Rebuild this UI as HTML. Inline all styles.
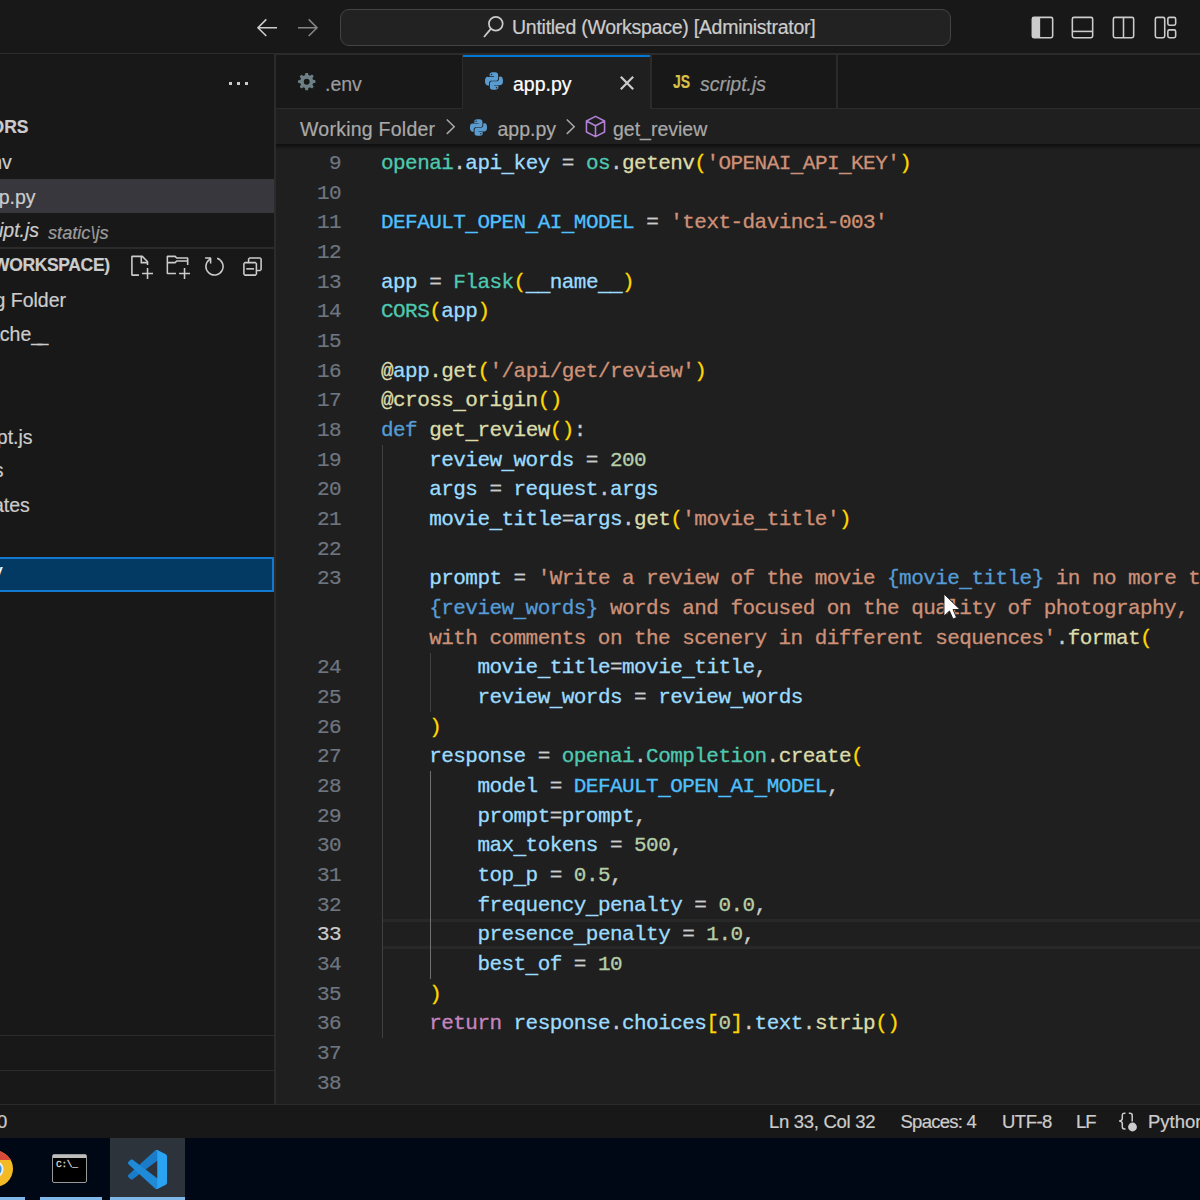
<!DOCTYPE html>
<html><head><meta charset="utf-8">
<style>
*{margin:0;padding:0;box-sizing:border-box}
html,body{width:1200px;height:1200px;overflow:hidden;background:#181818;font-family:"Liberation Sans",sans-serif;color:#CCCCCC;position:relative}
div,svg{position:absolute}
span{position:static}
.u{position:relative;top:3px}
.t{white-space:pre;line-height:1;-webkit-text-stroke:0.2px}
.ln{left:0;width:341px;text-align:right;font-family:"Liberation Mono",monospace;font-size:21px;letter-spacing:-0.6px;-webkit-text-stroke:0.2px;color:#6E7681;height:29.66px;line-height:29.66px}
.ln.act{color:#CCCCCC}
.cl{left:381px;font-family:"Liberation Mono",monospace;font-size:21px;letter-spacing:-0.555px;color:#CCCCCC;height:29.66px;line-height:29.66px;white-space:pre;-webkit-text-stroke:0.3px}
.v{color:#9CDCFE}.f{color:#DCDCAA}.c{color:#4EC9B0}.s{color:#CE9178}.k{color:#569CD6}.x{color:#C586C0}.n{color:#B5CEA8}.q{color:#4FC1FF}.b{color:#FFD700}.o{color:#CCCCCC}
.guide{width:1.5px;background:#404040}
.guide.ga{background:#707070}
.curline{left:383px;width:817px;border-top:3px solid #282828;border-bottom:3px solid #282828}
</style></head><body>
<!-- ============ TITLE BAR ============ -->
<div style="left:0;top:0;width:1200px;height:53px;background:#181818"></div>
<div style="left:0;top:53px;width:1200px;height:1.5px;background:#2B2B2B"></div>
<!-- back / forward -->
<svg style="left:250px;top:10px" width="80" height="35"><path d="M8 17.7 H27 M16.3 9.4 L8 17.7 L16.3 26" stroke="#CCCCCC" stroke-width="1.6" fill="none"/><path d="M48 17.7 H67 M58.7 9.4 L67 17.7 L58.7 26" stroke="#858585" stroke-width="1.6" fill="none"/></svg>
<!-- command center -->
<div style="left:340px;top:9px;width:611px;height:37px;border:1.5px solid #444444;border-radius:9px;background:#222222"></div>
<svg style="left:470px;top:10px" width="50" height="35"><circle cx="25.8" cy="13.8" r="6.9" stroke="#CCCCCC" stroke-width="1.7" fill="none"/><path d="M21 18.7 L14 27" stroke="#CCCCCC" stroke-width="1.8"/></svg>
<div class="t" style="left:512px;top:18.3px;font-size:19.5px;letter-spacing:-0.26px;color:#CCCCCC">Untitled (Workspace) [Administrator]</div>
<!-- layout icons -->
<svg style="left:1030px;top:15px" width="25" height="25" viewBox="0 0 16 16"><rect x="1.5" y="1.5" width="13" height="13" rx="1" stroke="#CCCCCC" stroke-width="1" fill="none"/><rect x="1.5" y="1.5" width="5" height="13" fill="#CCCCCC"/></svg>
<svg style="left:1070px;top:15px" width="25" height="25" viewBox="0 0 16 16"><rect x="1.5" y="1.5" width="13" height="13" rx="1" stroke="#CCCCCC" stroke-width="1" fill="none"/><path d="M1.5 10.5 H14.5" stroke="#CCCCCC" stroke-width="1"/></svg>
<svg style="left:1111px;top:15px" width="25" height="25" viewBox="0 0 16 16"><rect x="1.5" y="1.5" width="13" height="13" rx="1" stroke="#CCCCCC" stroke-width="1" fill="none"/><path d="M8 1.5 V14.5" stroke="#CCCCCC" stroke-width="1"/></svg>
<svg style="left:1153px;top:15px" width="25" height="25" viewBox="0 0 16 16"><rect x="1.5" y="1.5" width="6" height="13" rx="1" stroke="#CCCCCC" stroke-width="1" fill="none"/><rect x="9.5" y="1.5" width="5" height="5" rx="1" stroke="#CCCCCC" stroke-width="1" fill="none"/><rect x="9.5" y="9.5" width="5" height="5" rx="1" stroke="#CCCCCC" stroke-width="1" fill="none"/></svg>

<!-- ============ SIDEBAR ============ -->
<div style="left:0;top:54px;width:274px;height:1050px;background:#181818"></div>
<div style="left:274px;top:54px;width:1.5px;height:1050px;background:#2B2B2B"></div>
<!-- more dots -->
<div style="left:228.5px;top:82px;width:3px;height:3px;background:#CCCCCC"></div>
<div style="left:236.5px;top:82px;width:3px;height:3px;background:#CCCCCC"></div>
<div style="left:244.5px;top:82px;width:3px;height:3px;background:#CCCCCC"></div>
<div class="t" style="left:-49px;top:118.5px;font-size:17.5px;font-weight:bold;color:#CCCCCC">EDITORS</div>
<div class="t" style="left:-25px;top:152.5px;font-size:19.5px;color:#CCCCCC">.env</div>
<div style="left:0;top:178.5px;width:274px;height:34px;background:#37373D"></div>
<div class="t" style="left:-23px;top:187.5px;font-size:19.5px;color:#CCCCCC">app.py</div>
<div class="t" style="left:-27px;top:221px;font-size:19.5px;color:#CCCCCC;font-style:italic">script.js</div><div class="t" style="left:48px;top:224px;font-size:18.2px;color:#9D9D9D;font-style:italic">static\js</div>
<div style="left:0;top:247px;width:274px;height:1.5px;background:#2B2B2B"></div>
<div class="t" style="left:-12.5px;top:257px;font-size:17.5px;font-weight:bold;letter-spacing:-0.35px;color:#CCCCCC">(WORKSPACE)</div>
<!-- action icons -->
<svg style="left:128px;top:254px" width="25" height="25" viewBox="0 0 16 16"><path d="M9.5 1.1l3.4 3.5.1.4v2h-1V6H8V2H3v11h4v1H2.5l-.5-.5v-12l.5-.5h6.7l.3.1zM9 2v3h2.9L9 2zm4 14h-1v-3H9v-1h3V9h1v3h3v1h-3v3z" fill="#CCCCCC"/></svg>
<svg style="left:165px;top:254px" width="25" height="25" viewBox="0 0 16 16"><path d="M14.5 2H7.71l-.85-.85L6.51 1h-5l-.5.5v11l.5.5H7v-1H1.99V6h4.49l.35-.15.86-.86H14v1.5l-.001.51h1.011V2.5L14.5 2zm-.51 2h-6.5l-.35.15-.86.86H2v-3h4.29l.85.85.36.15H14l-.01.99zM13 16h-1v-3H9v-1h3V9h1v3h3v1h-3v3z" fill="#CCCCCC"/></svg>
<svg style="left:202px;top:254px" width="25" height="25" viewBox="0 0 16 16"><path d="M4.681 3H2V2h3.5l.5.5V6H5V4a5 5 0 1 0 4.53-.761l.302-.954A6 6 0 1 1 4.681 3z" fill="#CCCCCC"/></svg>
<svg style="left:240px;top:254px" width="25" height="25" viewBox="0 0 16 16"><path d="M9 9H4v1h5V9z" fill="#CCCCCC"/><path d="M5 3l1-1h7l1 1v7l-1 1h-2v2l-1 1H3l-1-1V6l1-1h2V3zm1 2h4l1 1v4h2V3H6v2zm4 1H3v7h7V6z" fill="#CCCCCC"/></svg>
<div class="t" style="left:-65.8px;top:290.5px;font-size:19.5px;color:#CCCCCC">Working Folder</div>
<div class="t" style="left:-63.1px;top:325px;font-size:19.5px;color:#CCCCCC">__pycache<span style="letter-spacing:-4.6px">__</span></div>
<div class="t" style="left:-33.5px;top:427.5px;font-size:19.5px;color:#CCCCCC">script.js</div>
<div class="t" style="left:-6.3px;top:461px;font-size:19.5px;color:#CCCCCC">s</div>
<div class="t" style="left:-54.8px;top:496px;font-size:19.5px;color:#CCCCCC">templates</div>
<div style="left:0;top:556.5px;width:274px;height:35px;background:#023A64;border:2px solid #1279CE;border-left:none"></div>
<div class="t" style="left:-56px;top:562px;font-size:19.5px;color:#FFFFFF">app.py</div>
<div style="left:0;top:1034.5px;width:274px;height:1.5px;background:#2B2B2B"></div>
<div style="left:0;top:1069.5px;width:274px;height:1.5px;background:#2B2B2B"></div>

<!-- ============ TABS ============ -->
<div style="left:275.5px;top:54.5px;width:924.5px;height:53.5px;background:#181818"></div>
<div style="left:275.5px;top:107.5px;width:924.5px;height:1.5px;background:#2B2B2B"></div>
<div style="left:461.5px;top:54.5px;width:1.5px;height:53px;background:#2B2B2B"></div>
<div style="left:463px;top:54.5px;width:187px;height:54.5px;background:#1F1F1F"></div>
<div style="left:463px;top:54.5px;width:187px;height:2px;background:#0078D4"></div>
<div style="left:650px;top:54.5px;width:1.5px;height:53px;background:#2B2B2B"></div>
<div style="left:836px;top:54.5px;width:1.5px;height:53px;background:#2B2B2B"></div>
<!-- gear -->
<svg style="left:296px;top:71px" width="21" height="21" viewBox="0 0 16 16"><path fill="#6D8086" fill-rule="evenodd" d="M9.1 1.3l.4 1.8c.4.1.8.3 1.1.5l1.6-1 1.3 1.3-1 1.6c.2.4.4.7.5 1.1l1.8.4v1.9l-1.8.4c-.1.4-.3.8-.5 1.1l1 1.6-1.3 1.3-1.6-1c-.4.2-.7.4-1.1.5l-.4 1.8H7.2l-.4-1.8c-.4-.1-.8-.3-1.1-.5l-1.6 1-1.3-1.3 1-1.6c-.2-.4-.4-.7-.5-1.1l-1.8-.4V7.2l1.8-.4c.1-.4.3-.8.5-1.1l-1-1.6 1.3-1.3 1.6 1c.4-.2.7-.4 1.1-.5l.4-1.8h1.9zM8.15 5.9a2.25 2.25 0 1 0 0 4.5 2.25 2.25 0 0 0 0-4.5z"/></svg>
<div class="t" style="left:325px;top:74.5px;font-size:19.5px;color:#9D9D9D">.env</div>
<!-- python icon -->
<svg style="left:484px;top:71px" width="20" height="20" viewBox="0 0 16 16"><path fill="#5A9BD0" d="M7.9 1C4.3 1 4.5 2.6 4.5 2.6v1.6h3.5v.5H3.1S.8 4.4.8 8s2 3.5 2 3.5h1.2V9.8s-.1-2 2-2h3.4s1.9 0 1.9-1.9V2.9S11.6 1 7.9 1zM6 2.1c.3 0 .6.3.6.6s-.3.6-.6.6-.6-.3-.6-.6.3-.6.6-.6z"/><path fill="#5A9BD0" d="M8.1 15c3.6 0 3.4-1.6 3.4-1.6v-1.6H8v-.5h4.9s2.3.3 2.3-3.3-2-3.5-2-3.5H12v1.7s.1 2-2 2H6.6s-1.9 0-1.9 1.9v3.1S4.4 15 8.1 15zm1.9-1.1c-.3 0-.6-.3-.6-.6s.3-.6.6-.6.6.3.6.6-.3.6-.6.6z"/></svg>
<div class="t" style="left:513px;top:75px;font-size:19.5px;color:#FFFFFF">app.py</div>
<svg style="left:616px;top:72px" width="22" height="22" viewBox="0 0 16 16"><path d="M3.5 3.5 L12.5 12.5 M12.5 3.5 L3.5 12.5" stroke="#CCCCCC" stroke-width="1.6"/></svg>
<div class="t" style="left:673px;top:74px;font-size:17.5px;font-weight:bold;color:#D8C048;transform:scaleX(0.8);transform-origin:0 0">JS</div>
<div class="t" style="left:700px;top:75px;font-size:19.5px;font-style:italic;color:#9D9D9D">script.js</div>

<!-- ============ BREADCRUMBS ============ -->
<div style="left:275.5px;top:109px;width:924.5px;height:35px;background:#1F1F1F"></div>
<div class="t" style="left:300px;top:119.5px;font-size:19.5px;letter-spacing:0.25px;color:#A9A9A9">Working Folder</div>
<svg style="left:445px;top:118px" width="12" height="18"><path d="M1.8 1.5 L9.2 8.7 L1.8 15.9" stroke="#A9A9A9" stroke-width="1.5" fill="none"/></svg>
<svg style="left:469px;top:118px" width="19" height="19" viewBox="0 0 16 16"><path fill="#5A9BD0" d="M7.9 1C4.3 1 4.5 2.6 4.5 2.6v1.6h3.5v.5H3.1S.8 4.4.8 8s2 3.5 2 3.5h1.2V9.8s-.1-2 2-2h3.4s1.9 0 1.9-1.9V2.9S11.6 1 7.9 1zM6 2.1c.3 0 .6.3.6.6s-.3.6-.6.6-.6-.3-.6-.6.3-.6.6-.6z"/><path fill="#5A9BD0" d="M8.1 15c3.6 0 3.4-1.6 3.4-1.6v-1.6H8v-.5h4.9s2.3.3 2.3-3.3-2-3.5-2-3.5H12v1.7s.1 2-2 2H6.6s-1.9 0-1.9 1.9v3.1S4.4 15 8.1 15zm1.9-1.1c-.3 0-.6-.3-.6-.6s.3-.6.6-.6.6.3.6.6-.3.6-.6.6z"/></svg>
<div class="t" style="left:497.5px;top:119.5px;font-size:19.5px;color:#A9A9A9">app.py</div>
<svg style="left:565px;top:118px" width="12" height="18"><path d="M1.8 1.5 L9.2 8.7 L1.8 15.9" stroke="#A9A9A9" stroke-width="1.5" fill="none"/></svg>
<svg style="left:583px;top:114px" width="25" height="25" viewBox="0 0 16 16"><path d="M8 1.5 L13.8 4.5 V11.5 L8 14.5 L2.2 11.5 V4.5 Z M2.2 4.5 L8 7.5 L13.8 4.5 M8 7.5 V14.5" stroke="#B180D7" stroke-width="1" fill="none" stroke-linejoin="round"/></svg>
<div class="t" style="left:613px;top:119.5px;font-size:19.5px;color:#A9A9A9">get_review</div>

<!-- ============ EDITOR ============ -->
<div style="left:275.5px;top:144px;width:924.5px;height:960px;background:#1F1F1F"></div>
<div style="left:275.5px;top:144px;width:924.5px;height:6px;background:linear-gradient(rgba(0,0,0,0.55),rgba(0,0,0,0))"></div>
<div class="curline" style="top:919.46px;height:29.66px"></div>
<div class="guide" style="left:381.80px;top:444.90px;height:593.20px"></div>
<div class="guide" style="left:429.92px;top:652.52px;height:59.32px"></div>
<div class="guide ga" style="left:429.92px;top:771.16px;height:207.62px"></div>
<div class="ln" style="top:149.10px">9</div>
<div class="cl" style="top:149.10px"><span class="c">openai</span><span class="o">.</span><span class="v">api<span class="u">_</span>key</span><span class="o"> = </span><span class="c">os</span><span class="o">.</span><span class="f">getenv</span><span class="b">(</span><span class="s">'OPENAI<span class="u">_</span>API<span class="u">_</span>KEY'</span><span class="b">)</span></div>
<div class="ln" style="top:178.76px">10</div>
<div class="ln" style="top:208.42px">11</div>
<div class="cl" style="top:208.42px"><span class="q">DEFAULT<span class="u">_</span>OPEN<span class="u">_</span>AI<span class="u">_</span>MODEL</span><span class="o"> = </span><span class="s">'text-davinci-003'</span></div>
<div class="ln" style="top:238.08px">12</div>
<div class="ln" style="top:267.74px">13</div>
<div class="cl" style="top:267.74px"><span class="v">app</span><span class="o"> = </span><span class="c">Flask</span><span class="b">(</span><span class="v"><span class="u">_</span><span class="u">_</span>name<span class="u">_</span><span class="u">_</span></span><span class="b">)</span></div>
<div class="ln" style="top:297.40px">14</div>
<div class="cl" style="top:297.40px"><span class="c">CORS</span><span class="b">(</span><span class="v">app</span><span class="b">)</span></div>
<div class="ln" style="top:327.06px">15</div>
<div class="ln" style="top:356.72px">16</div>
<div class="cl" style="top:356.72px"><span class="f">@</span><span class="v">app</span><span class="f">.get</span><span class="b">(</span><span class="s">'/api/get/review'</span><span class="b">)</span></div>
<div class="ln" style="top:386.38px">17</div>
<div class="cl" style="top:386.38px"><span class="f">@cross<span class="u">_</span>origin</span><span class="b">()</span></div>
<div class="ln" style="top:416.04px">18</div>
<div class="cl" style="top:416.04px"><span class="k">def</span><span class="o"> </span><span class="f">get<span class="u">_</span>review</span><span class="b">()</span><span class="o">:</span></div>
<div class="ln" style="top:445.70px">19</div>
<div class="cl" style="top:445.70px"><span class="o">    </span><span class="v">review<span class="u">_</span>words</span><span class="o"> = </span><span class="n">200</span></div>
<div class="ln" style="top:475.36px">20</div>
<div class="cl" style="top:475.36px"><span class="o">    </span><span class="v">args</span><span class="o"> = </span><span class="v">request</span><span class="o">.</span><span class="v">args</span></div>
<div class="ln" style="top:505.02px">21</div>
<div class="cl" style="top:505.02px"><span class="o">    </span><span class="v">movie<span class="u">_</span>title</span><span class="o">=</span><span class="v">args</span><span class="o">.</span><span class="f">get</span><span class="b">(</span><span class="s">'movie<span class="u">_</span>title'</span><span class="b">)</span></div>
<div class="ln" style="top:534.68px">22</div>
<div class="ln" style="top:564.34px">23</div>
<div class="cl" style="top:564.34px"><span class="o">    </span><span class="v">prompt</span><span class="o"> = </span><span class="s">'Write a review of the movie </span><span class="k">{movie<span class="u">_</span>title}</span><span class="s"> in no more than</span></div>
<div class="cl" style="top:594.00px"><span class="o">    </span><span class="k">{review<span class="u">_</span>words}</span><span class="s"> words and focused on the quality of photography, </span></div>
<div class="cl" style="top:623.66px"><span class="o">    </span><span class="s">with comments on the scenery in different sequences'</span><span class="o">.</span><span class="f">format</span><span class="b">(</span></div>
<div class="ln" style="top:653.32px">24</div>
<div class="cl" style="top:653.32px"><span class="o">        </span><span class="v">movie<span class="u">_</span>title</span><span class="o">=</span><span class="v">movie<span class="u">_</span>title</span><span class="o">,</span></div>
<div class="ln" style="top:682.98px">25</div>
<div class="cl" style="top:682.98px"><span class="o">        </span><span class="v">review<span class="u">_</span>words</span><span class="o"> = </span><span class="v">review<span class="u">_</span>words</span></div>
<div class="ln" style="top:712.64px">26</div>
<div class="cl" style="top:712.64px"><span class="o">    </span><span class="b">)</span></div>
<div class="ln" style="top:742.30px">27</div>
<div class="cl" style="top:742.30px"><span class="o">    </span><span class="v">response</span><span class="o"> = </span><span class="c">openai</span><span class="o">.</span><span class="c">Completion</span><span class="o">.</span><span class="f">create</span><span class="b">(</span></div>
<div class="ln" style="top:771.96px">28</div>
<div class="cl" style="top:771.96px"><span class="o">        </span><span class="v">model</span><span class="o"> = </span><span class="q">DEFAULT<span class="u">_</span>OPEN<span class="u">_</span>AI<span class="u">_</span>MODEL</span><span class="o">,</span></div>
<div class="ln" style="top:801.62px">29</div>
<div class="cl" style="top:801.62px"><span class="o">        </span><span class="v">prompt</span><span class="o">=</span><span class="v">prompt</span><span class="o">,</span></div>
<div class="ln" style="top:831.28px">30</div>
<div class="cl" style="top:831.28px"><span class="o">        </span><span class="v">max<span class="u">_</span>tokens</span><span class="o"> = </span><span class="n">500</span><span class="o">,</span></div>
<div class="ln" style="top:860.94px">31</div>
<div class="cl" style="top:860.94px"><span class="o">        </span><span class="v">top<span class="u">_</span>p</span><span class="o"> = </span><span class="n">0.5</span><span class="o">,</span></div>
<div class="ln" style="top:890.60px">32</div>
<div class="cl" style="top:890.60px"><span class="o">        </span><span class="v">frequency<span class="u">_</span>penalty</span><span class="o"> = </span><span class="n">0.0</span><span class="o">,</span></div>
<div class="ln act" style="top:920.26px">33</div>
<div class="cl" style="top:920.26px"><span class="o">        </span><span class="v">presence<span class="u">_</span>penalty</span><span class="o"> = </span><span class="n">1.0</span><span class="o">,</span></div>
<div class="ln" style="top:949.92px">34</div>
<div class="cl" style="top:949.92px"><span class="o">        </span><span class="v">best<span class="u">_</span>of</span><span class="o"> = </span><span class="n">10</span></div>
<div class="ln" style="top:979.58px">35</div>
<div class="cl" style="top:979.58px"><span class="o">    </span><span class="b">)</span></div>
<div class="ln" style="top:1009.24px">36</div>
<div class="cl" style="top:1009.24px"><span class="o">    </span><span class="x">return</span><span class="o"> </span><span class="v">response</span><span class="o">.</span><span class="v">choices</span><span class="b">[</span><span class="n">0</span><span class="b">]</span><span class="o">.</span><span class="v">text</span><span class="o">.</span><span class="f">strip</span><span class="b">()</span></div>
<div class="ln" style="top:1038.90px">37</div>
<div class="ln" style="top:1068.56px">38</div>
<!-- mouse pointer -->
<svg style="left:942px;top:592px" width="20" height="30" viewBox="0 0 20 30"><path d="M2 2 V24 L7.5 19 L11 27 L14.5 25.5 L11 17.5 L18 17.5 Z" fill="#FFFFFF" stroke="#1A1A1A" stroke-width="0.9" stroke-linejoin="round"/></svg>

<!-- ============ STATUS BAR ============ -->
<div style="left:0;top:1103.5px;width:1200px;height:1.5px;background:#2B2B2B"></div>
<div style="left:0;top:1105px;width:1200px;height:33px;background:#181818"></div>
<div class="t" style="left:-3px;top:1112.5px;font-size:18.5px;color:#CCCCCC">0</div>
<div class="t" style="left:769px;top:1112.5px;font-size:18.5px;letter-spacing:-0.3px;color:#CCCCCC">Ln 33, Col 32</div>
<div class="t" style="left:900.5px;top:1112.5px;font-size:18.5px;letter-spacing:-0.75px;color:#CCCCCC">Spaces: 4</div>
<div class="t" style="left:1002px;top:1112.5px;font-size:18.5px;letter-spacing:-0.5px;color:#CCCCCC">UTF-8</div>
<div class="t" style="left:1076px;top:1112.5px;font-size:18.5px;letter-spacing:-1px;color:#CCCCCC">LF</div>
<svg style="left:1116px;top:1111px" width="24" height="22"><path d="M9.5 2.3 H8.4 C6.9 2.3 6.3 3 6.3 4.4 V7.6 C6.3 9.1 5.5 9.8 3.2 10.1 C5.5 10.4 6.3 11.1 6.3 12.6 V15.8 C6.3 17.2 6.9 17.9 8.4 17.9 H9.5" stroke="#CCCCCC" stroke-width="1.5" fill="none"/><path d="M12.8 2.3 H13.9 C15.4 2.3 16.2 3 16.2 4.4 V10.5" stroke="#CCCCCC" stroke-width="1.5" fill="none"/><circle cx="16.5" cy="16" r="4.4" fill="#CCCCCC"/></svg>
<div class="t" style="left:1148px;top:1112.5px;font-size:18.5px;color:#CCCCCC">Python</div>

<!-- ============ TASKBAR ============ -->
<div style="left:0;top:1138px;width:1200px;height:62px;background:#010815"></div>
<div style="left:110px;top:1138px;width:75px;height:59px;background:#2D333B"></div>
<div style="left:0;top:1197px;width:25px;height:3px;background:#7FB8E8"></div>
<div style="left:40px;top:1197px;width:62px;height:3px;background:#7FB8E8"></div>
<div style="left:110px;top:1197px;width:75px;height:3px;background:#7FB8E8"></div>
<!-- chrome partial -->
<svg style="left:0;top:1148px" width="14" height="42"><defs><clipPath id="cr"><rect x="-30" y="0" width="50" height="12"/></clipPath></defs><circle cx="-5.2" cy="20.8" r="18.2" fill="#F4BA25"/><circle cx="-5.2" cy="20.8" r="18.2" fill="#D8493A" clip-path="url(#cr)"/><circle cx="-5.2" cy="21.2" r="8.7" fill="#E8EEF2"/><circle cx="-5.2" cy="21.2" r="6.8" fill="#3A8ED8"/></svg>
<!-- cmd -->
<div style="left:52px;top:1154px;width:35px;height:29px;background:#000;border:1.5px solid #9A9A9A;border-radius:2px"></div>
<div style="left:53px;top:1155px;width:33px;height:3px;background:#BDBDBD"></div>
<div class="t" style="left:56px;top:1160px;font-size:9.5px;font-family:'Liberation Mono',monospace;color:#D8D8D8;letter-spacing:-0.3px;-webkit-text-stroke:0.3px">C:\_</div>
<!-- vscode -->
<svg style="left:128px;top:1150px" width="39" height="39" viewBox="0 0 100 100"><path fill="#1A7BC9" d="M96.4614 10.7962L75.8569 0.875542C73.4719 -0.272773 70.6217 0.211611 68.75 2.08333L1.29858 63.5832C-0.515693 65.2373 -0.513607 68.0937 1.30308 69.7452L6.81272 74.754C8.29793 76.1042 10.5347 76.2036 12.1338 74.9905L93.3609 13.3699C96.086 11.3026 100 13.2462 100 16.6667V16.4275C100 14.0265 98.6246 11.8378 96.4614 10.7962Z"/><path fill="#1E8AD8" d="M96.4614 89.2038L75.8569 99.1245C73.4719 100.273 70.6217 99.7884 68.75 97.9167L1.29858 36.4169C-0.515693 34.7627 -0.513607 31.9063 1.30308 30.2548L6.81272 25.246C8.29793 23.8958 10.5347 23.7964 12.1338 25.0095L93.3609 86.6301C96.086 88.6974 100 86.7538 100 83.3334V83.5726C100 85.9735 98.6246 88.1622 96.4614 89.2038Z"/><path fill="#2AA3F2" d="M75.8578 99.1263C73.4721 100.274 70.6219 99.7885 68.75 97.9166C71.0564 100.223 75 98.5895 75 95.3278V4.67213C75 1.41039 71.0564 -0.223106 68.75 2.08329C70.6219 0.211402 73.4721 -0.273666 75.8578 0.873633L96.4587 10.7807C98.6234 11.8217 100 14.0112 100 16.4132V83.5871C100 85.9891 98.6234 88.1786 96.4586 89.2196L75.8578 99.1263Z"/></svg>
</body></html>
